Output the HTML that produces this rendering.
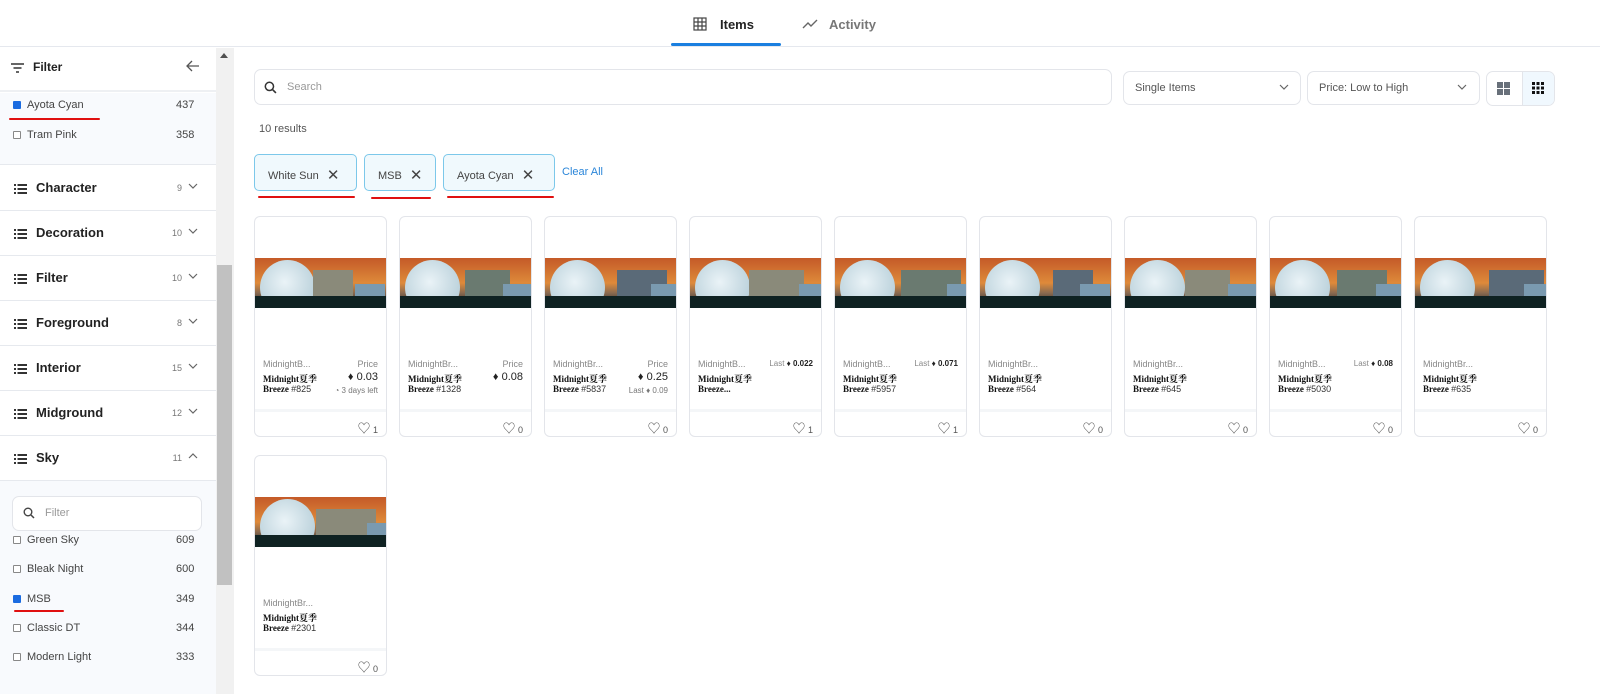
<!DOCTYPE html>
<html><head><meta charset="utf-8">
<style>
*{box-sizing:border-box;margin:0;padding:0}
body{width:1600px;height:694px;overflow:hidden;background:#fff;font-family:"Liberation Sans","Noto Sans CJK SC",sans-serif;color:#333;position:relative}
.abs{position:absolute}
.top{left:0;top:0;width:1600px;height:47px;border-bottom:1px solid #e5e8ee}
.tab{top:17px;font-size:13px;font-weight:bold}
.side{left:0;top:48px;width:216px;height:646px;background:#fff}
.sec{left:0;width:216px;height:45px;border-bottom:1px solid #e6e9ee;background:#fff}
.sec .t{position:absolute;left:36px;top:14px;font-size:13px;font-weight:bold;color:#222}
.sec .n{position:absolute;right:34px;top:17px;font-size:9px;color:#777}
.sec .chev{position:absolute;right:18px;top:15px}
.li{position:absolute;left:13px;font-size:11px;color:#444;white-space:nowrap}
.li .cb{display:inline-block;width:8px;height:8px;border:1px solid #888;border-radius:1px;vertical-align:-1px;margin-right:6px;background:#fff}
.li .cb.on{background:#1a6be0;border-color:#1a6be0}
.cnt{position:absolute;left:176px;font-size:11px;color:#444}
.card{position:absolute;width:133px;height:221px;border:1px solid #e3e5ea;border-radius:6px;overflow:hidden;background:#fff}
.img{position:absolute;left:0;top:41px;width:133px;height:50px;overflow:hidden;background:linear-gradient(180deg,#c45a28 0%,#de8a3a 50%,#8a6a50 70%,#0d1a1a 100%)}
.moon{position:absolute;left:5px;top:2px;width:55px;height:55px;border-radius:50%;background:radial-gradient(circle at 45% 40%,#eaf3f7,#a8c4d0)}
.bld{position:absolute;background:#6f7f80}
.ground{position:absolute;left:0;bottom:0;width:133px;height:12px;background:#0f2222}
.c1{position:absolute;left:8px;top:142px;font-size:9px;color:#888}
.c2{position:absolute;left:8px;top:155px;font-size:9px;font-weight:bold;font-family:"Liberation Serif","Noto Serif CJK SC",serif;color:#111}
.c3{position:absolute;left:8px;top:167px;font-size:9px;color:#111;font-family:"Liberation Serif",serif;font-weight:bold}
.c3 span{font-family:"Liberation Sans",sans-serif;font-weight:normal;color:#333}
.pl{position:absolute;right:8px;top:142px;font-size:9px;color:#888;text-align:right;white-space:nowrap}
.pv{position:absolute;right:8px;top:154px;font-size:11px;color:#222}
.ps{position:absolute;right:8px;top:169px;font-size:8px;color:#777;white-space:nowrap}
.foot{position:absolute;left:0;top:192px;width:133px;height:29px;border-top:3px solid #f4f6f8}
.heart{position:absolute;right:10px;top:6px;font-size:9px;color:#555}
.chip{position:absolute;top:154px;height:37px;border:1px solid #7cc8ea;border-radius:5px;background:#f0f9fd;font-size:11px;color:#444;padding:11px 13px;white-space:nowrap}
.red{position:absolute;height:2px;background:#e01010;border-radius:1px}
.box{position:absolute;border:1px solid #e3e5ea;border-radius:7px;background:#fff;font-size:11px;color:#555}
</style></head><body>

<div class="abs top"></div>
<svg class="abs" style="left:693px;top:17px" width="14" height="14" viewBox="0 0 14 14"><g stroke="#444" stroke-width="1.2" fill="none"><rect x="1" y="1" width="12" height="12"/><path d="M5 1V13M9 1V13M1 5H13M1 9H13"/></g></svg>
<div class="abs tab" style="left:720px;color:#222">Items</div>
<div class="abs" style="left:671px;top:43px;width:110px;height:3px;background:#1a7fe0;border-radius:2px"></div>
<svg class="abs" style="left:802px;top:18px" width="16" height="12" viewBox="0 0 16 12"><path d="M1 10L6 5L9 8L15 2" stroke="#666" stroke-width="1.4" fill="none"/></svg>
<div class="abs tab" style="left:829px;color:#777">Activity</div>

<!-- sidebar -->
<div class="abs side">
  <div class="abs" style="left:0;top:0;width:216px;height:44px;border-bottom:2px solid #eef0f3"></div>
  <svg class="abs" style="left:11px;top:15px" width="13" height="10" viewBox="0 0 13 10"><path d="M0 1H13M2.5 5H10.5M5 9H8" stroke="#333" stroke-width="1.6"/></svg>
  <div class="abs" style="left:33px;top:12px;font-size:12px;font-weight:bold;color:#222">Filter</div>
  <svg class="abs" style="left:186px;top:12px" width="14" height="12" viewBox="0 0 14 12"><path d="M13 6H1M6 1L1 6L6 11" stroke="#555" stroke-width="1.3" fill="none"/></svg>
  <div class="abs" style="left:0;top:45px;width:216px;height:72px;background:#f8fafd;border-bottom:1px solid #e6e9ee"></div>
  <div class="li" style="top:51px"><span class="cb on"></span>Ayota Cyan</div><div class="cnt" style="top:51px">437</div>
  <div class="red" style="left:9px;top:70px;width:91px"></div>
  <div class="li" style="top:81px"><span class="cb"></span>Tram Pink</div><div class="cnt" style="top:81px">358</div>
</div>
<div class="abs" style="left:0;top:481px;width:216px;height:213px;background:#f8fafd"></div>
<div id="secs"></div>

<div class="box" style="left:12px;top:496px;width:190px;height:35px;padding:10px 0 0 32px;color:#999">Filter</div>
<svg class="abs" style="left:23px;top:507px" width="12" height="12" viewBox="0 0 12 12"><circle cx="5" cy="5" r="3.8" stroke="#444" stroke-width="1.4" fill="none"/><path d="M8 8L11 11" stroke="#444" stroke-width="1.5"/></svg>
<div class="li" style="top:534px"><span class="cb"></span>Green Sky</div><div class="cnt" style="top:534px">609</div>
<div class="li" style="top:563px"><span class="cb"></span>Bleak Night</div><div class="cnt" style="top:563px">600</div>
<div class="li" style="top:593px"><span class="cb on"></span>MSB</div><div class="cnt" style="top:593px">349</div>
<div class="red" style="left:14px;top:610px;width:50px"></div>
<div class="li" style="top:622px"><span class="cb"></span>Classic DT</div><div class="cnt" style="top:622px">344</div>
<div class="li" style="top:651px"><span class="cb"></span>Modern Light</div><div class="cnt" style="top:651px">333</div>

<!-- scrollbar -->
<div class="abs" style="left:216px;top:48px;width:18px;height:646px;background:#f1f1f1"></div>
<div class="abs" style="left:220px;top:53px;width:0;height:0;border-left:4px solid transparent;border-right:4px solid transparent;border-bottom:5px solid #505050"></div>
<div class="abs" style="left:217px;top:265px;width:15px;height:320px;background:#c1c1c1"></div>

<!-- toolbar -->
<div class="box" style="left:254px;top:69px;width:858px;height:36px;padding:11px 0 0 32px;color:#999">Search</div>
<svg class="abs" style="left:264px;top:81px" width="13" height="13" viewBox="0 0 12 12"><circle cx="5" cy="5" r="3.8" stroke="#333" stroke-width="1.4" fill="none"/><path d="M8 8L11 11" stroke="#333" stroke-width="1.5"/></svg>
<div class="box" style="left:1123px;top:71px;width:178px;height:34px;padding:10px 0 0 11px">Single Items</div>
<div class="box" style="left:1307px;top:71px;width:173px;height:34px;padding:10px 0 0 11px">Price: Low to High</div>
<svg class="abs" style="left:1279px;top:84px" width="10" height="6"><path d="M1 1L5 5L9 1" stroke="#666" stroke-width="1.2" fill="none"/></svg>
<svg class="abs" style="left:1457px;top:84px" width="10" height="6"><path d="M1 1L5 5L9 1" stroke="#666" stroke-width="1.2" fill="none"/></svg>
<div class="box" style="left:1486px;top:71px;width:69px;height:35px;overflow:hidden"><div class="abs" style="left:35px;top:0;width:34px;height:35px;background:#f0f8fe;border-left:1px solid #e3e5ea"></div></div>
<svg class="abs" style="left:1497px;top:82px" width="13" height="13"><g fill="#68707a"><rect x="0" y="0" width="6" height="6"/><rect x="7" y="0" width="6" height="6"/><rect x="0" y="7" width="6" height="6"/><rect x="7" y="7" width="6" height="6"/></g></svg>
<svg class="abs" style="left:1532px;top:82px" width="12" height="12"><g fill="#111"><rect x="0" y="0" width="3" height="3"/><rect x="4.5" y="0" width="3" height="3"/><rect x="9" y="0" width="3" height="3"/><rect x="0" y="4.5" width="3" height="3"/><rect x="4.5" y="4.5" width="3" height="3"/><rect x="9" y="4.5" width="3" height="3"/><rect x="0" y="9" width="3" height="3"/><rect x="4.5" y="9" width="3" height="3"/><rect x="9" y="9" width="3" height="3"/></g></svg>

<div class="abs" style="left:259px;top:123px;font-size:11px;color:#555">10 results</div>

<div class="chip" style="left:254px;width:103px">White Sun <span style="font-size:15px;margin-left:5px;vertical-align:-1px">✕</span></div>
<div class="chip" style="left:364px;width:72px">MSB <span style="font-size:15px;margin-left:5px;vertical-align:-1px">✕</span></div>
<div class="chip" style="left:443px;width:112px">Ayota Cyan <span style="font-size:15px;margin-left:5px;vertical-align:-1px">✕</span></div>
<div class="abs" style="left:562px;top:166px;font-size:11px;color:#2b86d9">Clear All</div>
<div class="red" style="left:258px;top:196px;width:97px"></div>
<div class="red" style="left:371px;top:197px;width:60px"></div>
<div class="red" style="left:447px;top:196px;width:107px"></div>

<div id="cards"></div>

<script>
var secs=[["Character",9],["Decoration",10],["Filter",10],["Foreground",8],["Interior",15],["Midground",12],["Sky",11]];
var h='';
secs.forEach(function(s,i){var y=166+i*45;var up=i==6;
h+='<div class="abs sec" style="top:'+y+'px"><svg class="abs" style="left:14px;top:18px" width="13" height="10"><g fill="#333"><rect x="0" y="0" width="2" height="2"/><rect x="0" y="4" width="2" height="2"/><rect x="0" y="8" width="2" height="2"/><rect x="3.5" y="0" width="9.5" height="2"/><rect x="3.5" y="4" width="9.5" height="2"/><rect x="3.5" y="8" width="9.5" height="2"/></g></svg><div class="t">'+s[0]+'</div><div class="n">'+s[1]+'</div><svg class="chev" width="10" height="10"><path d="'+(up?'M1 7L5 3L9 7':'M1 3L5 7L9 3')+'" stroke="#666" stroke-width="1.2" fill="none"/></svg></div>';});
document.getElementById('secs').innerHTML=h;
var cards=[["MidnightB...","#825","Price","0.03","◔ 3 days left",1],["MidnightBr...","#1328","Price","0.08","",0],["MidnightBr...","#5837","Price","0.25","Last ♦ 0.09",0],["MidnightB...","Breeze...","L0.022","","",1],["MidnightB...","#5957","L0.071","","",1],["MidnightBr...","#564","","","",0],["MidnightBr...","#645","","","",0],["MidnightB...","#5030","L0.08","","",0],["MidnightBr...","#635","","","",0],["MidnightBr...","#2301","","","",0]];
var c='';
cards.forEach(function(d,i){var x=254+(i%9)*145,y=i<9?216:455;
var img='<div class="img"><div class="moon"></div><div class="bld" style="left:'+(58+i*7%20)+'px;top:12px;width:'+(40+i*5%25)+'px;height:28px;background:'+(["#8a8a7a","#6a7a70","#5a6a78"][i%3])+'"></div><div class="bld" style="left:'+(100+i*3%15)+'px;top:26px;width:30px;height:14px;background:#7a9ab0"></div><div class="ground"></div></div>';
var t='<div class="c1">'+d[0]+'</div><div class="c2">Midnight夏季</div>';
t+= d[1]=='Breeze...'?'<div class="c3">Breeze...</div>':'<div class="c3">Breeze <span>'+d[1]+'</span></div>';
if(d[2]=='Price'){t+='<div class="pl">Price</div><div class="pv">♦ '+d[3]+'</div><div class="ps">'+d[4]+'</div>';}
else if(d[2]){t+='<div class="pl" style="font-size:8px">Last <b style="color:#222">♦ '+d[2].slice(1)+'</b></div>';}
c+='<div class="card" style="left:'+x+'px;top:'+y+'px">'+img+t+'<div class="foot"><div class="heart"><span style="font-size:13px;color:#555">♡</span> '+d[5]+'</div></div></div>';});
document.getElementById('cards').innerHTML=c;
</script>
</body></html>
